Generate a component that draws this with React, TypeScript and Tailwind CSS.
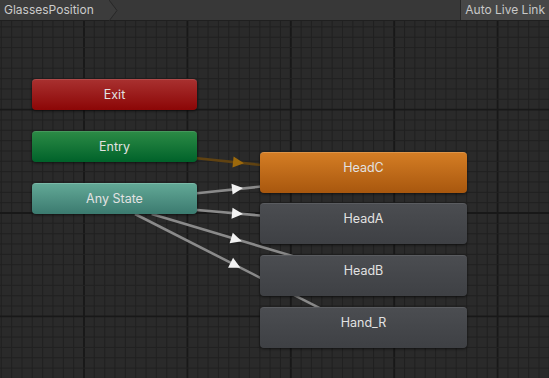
import React from "react";

const W = 549;
const H = 378;

function Grid() {
  const lines: React.ReactNode[] = [];
  const step = 10.34;
  for (let i = -20; i < 60; i++) {
    const x = 84 + i * step;
    if (x < -2 || x > W + 2) continue;
    const major = ((i % 10) + 10) % 10 === 0;
    lines.push(
      <line key={"v" + i} x1={x} y1={0} x2={x} y2={H} stroke={major ? "#181818" : "#212121"} strokeWidth={major ? 1.8 : 1} />
    );
  }
  for (let j = -30; j < 40; j++) {
    const y = 213 + j * step;
    if (y < -2 || y > H + 2) continue;
    const major = ((j % 10) + 10) % 10 === 0;
    lines.push(
      <line key={"h" + j} x1={0} y1={y} x2={W} y2={y} stroke={major ? "#181818" : "#212121"} strokeWidth={major ? 1.8 : 1} />
    );
  }
  return <>{lines}</>;
}

function Arrow({ x, y, angle, color }: { x: number; y: number; angle: number; color: string }) {
  return (
    <polygon
      points="6,0 -5,-5.5 -5,5.5"
      fill={color}
      transform={`translate(${x} ${y}) rotate(${angle})`}
    />
  );
}

function Edges() {
  const ang = (x1: number, y1: number, x2: number, y2: number) => (Math.atan2(y2 - y1, x2 - x1) * 180) / Math.PI;
  return (
    <>
      {/* Entry -> HeadC */}
      <line x1={180} y1={156.5} x2={300} y2={169} stroke="#5f4212" strokeWidth={2.6} />
      <Arrow x={238} y={162.6} angle={ang(180, 156.5, 300, 169)} color="#9c690c" />
      {/* Any State -> HeadC */}
      <line x1={180} y1={195} x2={300} y2={182.5} stroke="#8a8a8a" strokeWidth={2.6} />
      <Arrow x={237} y={188.6} angle={ang(180, 195, 300, 182.5)} color="#f2f2f2" />
      {/* Any State -> HeadA */}
      <line x1={180} y1={208.5} x2={300} y2={219} stroke="#8a8a8a" strokeWidth={2.6} />
      <Arrow x={237} y={213.6} angle={ang(180, 208.5, 300, 219)} color="#f2f2f2" />
      {/* Any State -> HeadB */}
      <line x1={151.7} y1={214} x2={300} y2={258.3} stroke="#8a8a8a" strokeWidth={2.6} />
      <Arrow x={236} y={239.5} angle={ang(151.7, 214, 300, 258.3)} color="#f2f2f2" />
      {/* Any State -> Hand_R */}
      <line x1={135} y1={214} x2={330} y2={313.3} stroke="#8a8a8a" strokeWidth={2.6} />
      <Arrow x={235} y={265} angle={ang(135, 214, 330, 313.3)} color="#f2f2f2" />
    </>
  );
}

function Node({ label, cls }: { label: string; cls: string }) {
  return (
    <div className={cls}>
      <span>{label}</span>
    </div>
  );
}

export default function App() {
  return (
    <div
      className="w-[549px] h-[378px] overflow-hidden bg-[#2a2a2a] flex flex-col text-[#e2e2e2]"
      style={{ fontFamily: "Inter, 'Noto Sans', 'Liberation Sans', sans-serif" }}
    >
      {/* Top bar */}
      <div className="h-[21px] flex items-stretch bg-[#383838] border-b border-[#1f1f1f] shrink-0">
        <div className="relative flex items-center pl-[4px] pr-[16px] bg-[#3c3c3c] text-[12px] text-[#cbcbcb]">
          <span>GlassesPosition</span>
          <svg className="absolute right-[-8px] top-0" width="9" height="21" viewBox="0 0 9 21">
            <polygon points="0,0 8,10.5 0,21" fill="#3c3c3c" />
            <polyline points="0,0 8,10.5 0,21" fill="none" stroke="#282828" strokeWidth="1" />
          </svg>
        </div>
        <div className="flex-1" />
        <div className="flex items-center px-[4px] bg-[#474747] border-l border-[#262626] text-[12px] text-[#c8c8c8]">
          Auto Live Link
        </div>
      </div>

      {/* Canvas */}
      <div className="relative flex-1">
        <svg className="absolute inset-0" width={W} height={357} viewBox={`0 21 ${W} 357`}>
          <Grid />
          <Edges />
        </svg>

        <Node
          label="Exit"
          cls="absolute left-[32px] top-[58px] w-[165px] h-[31px] rounded-[4px] flex items-center justify-center text-[12.5px] bg-[linear-gradient(#a8302f,#8c0606)] border-t border-[#b34a4a] shadow-[0_1px_3px_rgba(0,0,0,0.6)]"
        />
        <Node
          label="Entry"
          cls="absolute left-[32px] top-[110px] w-[165px] h-[31px] rounded-[4px] flex items-center justify-center text-[12.5px] bg-[linear-gradient(#2b8a45,#00622a)] border-t border-[#45985c] shadow-[0_1px_3px_rgba(0,0,0,0.6)]"
        />
        <Node
          label="Any State"
          cls="absolute left-[32px] top-[162px] w-[165px] h-[31px] rounded-[4px] flex items-center justify-center text-[12.5px] bg-[linear-gradient(#62a896,#3b7a6f)] border-t border-[#7bbaa9] shadow-[0_1px_3px_rgba(0,0,0,0.6)]"
        />

        <Node
          label="HeadC"
          cls="absolute left-[260px] top-[131px] w-[207px] h-[41px] rounded-[4px] flex justify-center pt-[6px] text-[12.5px] bg-[linear-gradient(#d47d24,#a8570e)] border-t border-[#dd9448] shadow-[0_1px_3px_rgba(0,0,0,0.6)]"
        />
        <Node
          label="HeadA"
          cls="absolute left-[260px] top-[182px] w-[207px] h-[41px] rounded-[4px] flex justify-center pt-[6px] text-[12.5px] bg-[linear-gradient(#4b4d51,#3e4044)] border-t border-[#5a5c60] shadow-[0_1px_3px_rgba(0,0,0,0.6)]"
        />
        <Node
          label="HeadB"
          cls="absolute left-[260px] top-[234px] w-[207px] h-[41px] rounded-[4px] flex justify-center pt-[6px] text-[12.5px] bg-[linear-gradient(#4b4d51,#3e4044)] border-t border-[#5a5c60] shadow-[0_1px_3px_rgba(0,0,0,0.6)]"
        />
        <Node
          label="Hand_R"
          cls="absolute left-[260px] top-[286px] w-[207px] h-[41px] rounded-[4px] flex justify-center pt-[6px] text-[12.5px] bg-[linear-gradient(#4b4d51,#3e4044)] border-t border-[#5a5c60] shadow-[0_1px_3px_rgba(0,0,0,0.6)]"
        />
      </div>
    </div>
  );
}
